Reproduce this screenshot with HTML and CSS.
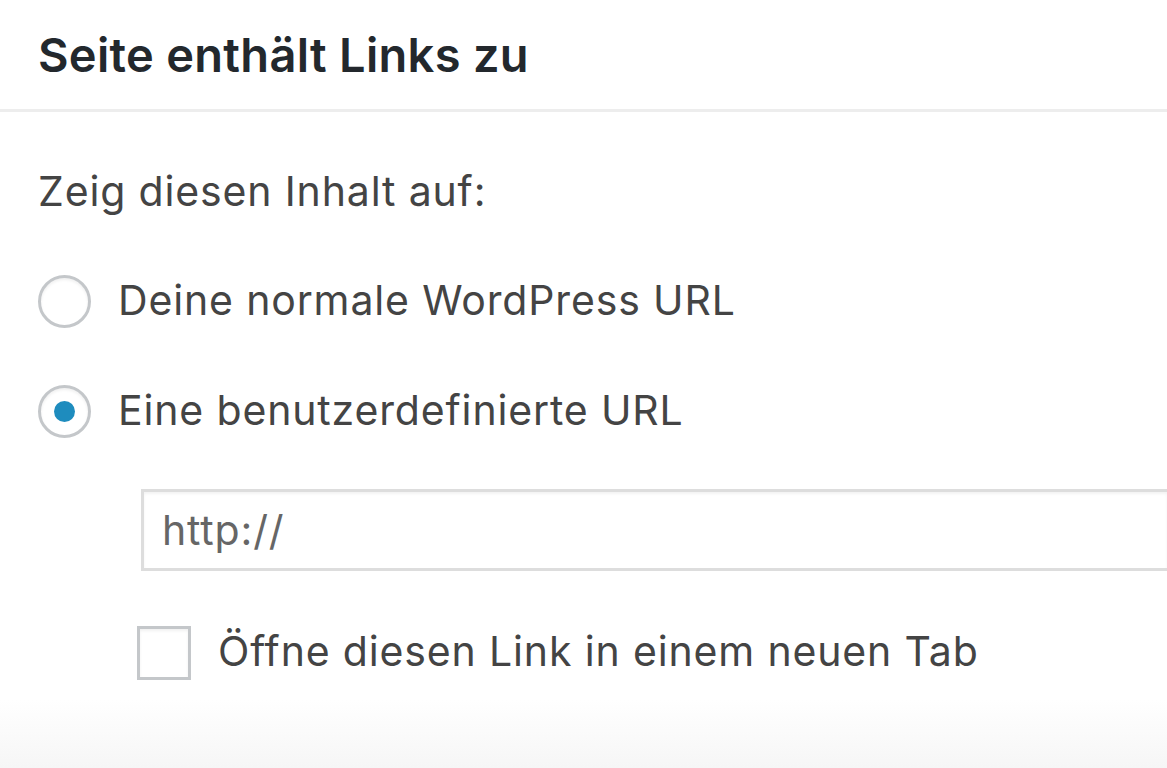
FILE: index.html
```html
<!DOCTYPE html>
<html lang="de">
<head>
<meta charset="utf-8">
<title>Seite enthält Links zu</title>
<link rel="stylesheet" href="styles.css">
</head>
<body>
<div class="panel">
  <header class="panel-head">
    <h2 class="panel-title">Seite enthält Links zu</h2>
  </header>
  <div class="panel-body">
    <p class="intro">Zeig diesen Inhalt auf:</p>
    <label class="option">
      <span class="radio"></span>
      <span class="option-text">Deine normale WordPress URL</span>
    </label>
    <label class="option">
      <span class="radio checked"></span>
      <span class="option-text">Eine benutzerdefinierte URL</span>
    </label>
    <div class="url-field">
      <span class="url-value">http://</span>
    </div>
    <label class="check-row">
      <span class="checkbox"></span>
      <span class="option-text">Öffne diesen Link in einem neuen Tab</span>
    </label>
  </div>
  <div class="panel-foot"></div>
</div>
</body>
</html>
```
FILE: styles.css
```css
html, body {
  margin: 0;
  padding: 0;
  background: #ffffff;
}
body {
  width: 1167px;
  height: 768px;
  overflow: hidden;
  font-family: "Inter", "Liberation Sans", sans-serif;
}
.panel {
  display: flex;
  flex-direction: column;
  height: 768px;
}
.panel-head {
  height: 112px;
  border-bottom: 3px solid #ededed;
  padding-left: 38px;
  display: flex;
  align-items: center;
  box-sizing: border-box;
}
.panel-title {
  margin: 0;
  font-size: 47px;
  font-weight: 600;
  color: #23282d;
  letter-spacing: 0.3px;
}
.panel-body {
  padding-left: 38px;
  display: flex;
  flex-direction: column;
  color: #444;
  font-size: 41px;
  letter-spacing: 0.85px;
}
.intro {
  margin: 0;
  height: 163px;
  display: flex;
  align-items: center;
  padding-bottom: 6px;
  box-sizing: border-box;
}
.option {
  display: flex;
  align-items: center;
  gap: 27px;
  height: 53px;
  margin-bottom: 57px;
}
.radio {
  width: 53px;
  height: 53px;
  border-radius: 50%;
  border: 3px solid #c4c7ca;
  box-sizing: border-box;
  display: flex;
  align-items: center;
  justify-content: center;
  box-shadow: inset 0 2px 3px rgba(0,0,0,0.06);
  flex: none;
}
.radio.checked::after {
  content: "";
  width: 21px;
  height: 21px;
  border-radius: 50%;
  background: #1e8cbe;
}
.option-text {
  position: relative;
  top: -2px;
}
.url-field {
  margin-left: 103px;
  margin-top: -6px;
  height: 82px;
  border: 3px solid #dddddd;
  border-right: none;
  box-sizing: border-box;
  display: flex;
  align-items: center;
  padding-left: 18px;
  box-shadow: inset 0 2px 3px rgba(0,0,0,0.05);
}
.url-value {
  color: #666;
}
.check-row {
  display: flex;
  align-items: center;
  gap: 27px;
  margin-left: 99px;
  margin-top: 55px;
}
.checkbox {
  width: 54px;
  height: 54px;
  border: 3px solid #c4c7ca;
  box-sizing: border-box;
  flex: none;
  box-shadow: inset 0 2px 3px rgba(0,0,0,0.06);
}
.panel-foot {
  margin-top: auto;
  height: 68px;
  background: linear-gradient(#ffffff, #f6f6f6);
}
```
